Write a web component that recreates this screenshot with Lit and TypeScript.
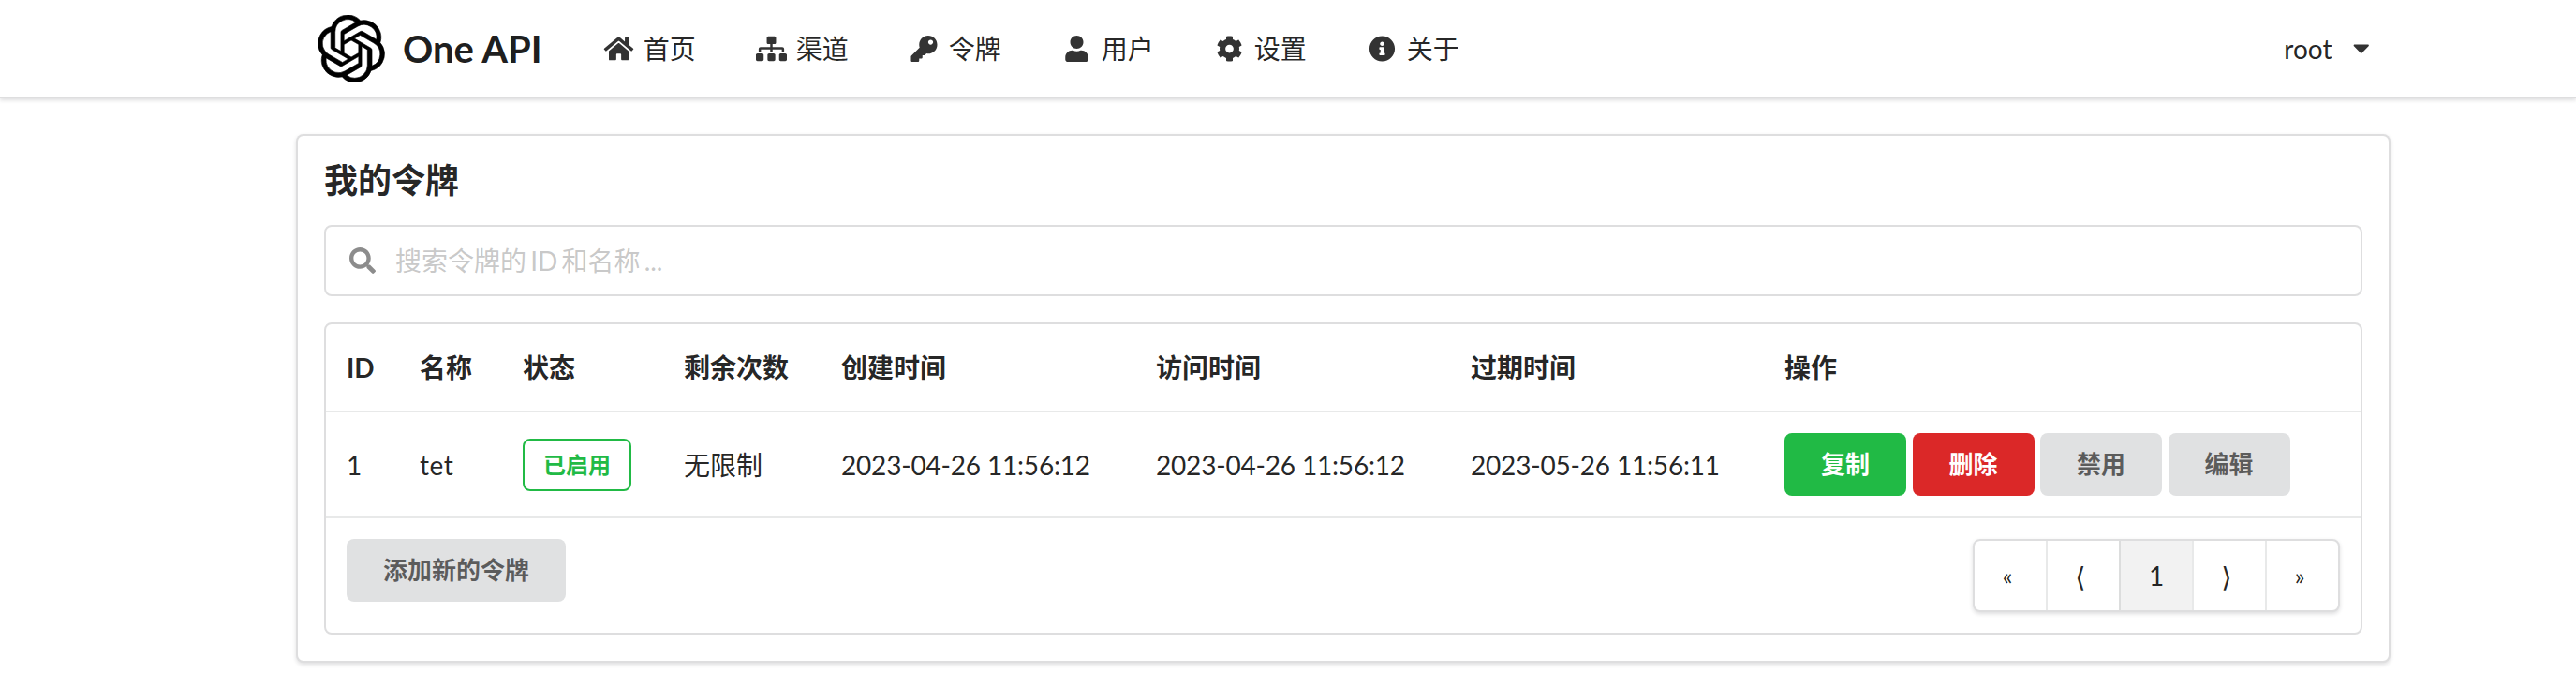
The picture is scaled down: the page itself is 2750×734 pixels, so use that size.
import { LitElement, html, css, svg } from "lit";
import { customElement } from "lit/decorators.js";

const icon = (vb: string, d: string, cls = "ic") =>
  html`<svg class=${cls} viewBox=${vb} aria-hidden="true">${svg`<path d=${d}></path>`}</svg>`;

const ICONS = {
  home: ["0 0 576 512", "M280.37 148.26L96 300.11V464a16 16 0 0 0 16 16l112.06-.29a16 16 0 0 0 15.92-16V368a16 16 0 0 1 16-16h64a16 16 0 0 1 16 16v95.64a16 16 0 0 0 16 16.05L464 480a16 16 0 0 0 16-16V300L295.67 148.26a12.19 12.19 0 0 0-15.3 0zM571.6 251.47L488 182.56V44.05a12 12 0 0 0-12-12h-56a12 12 0 0 0-12 12v72.61L318.47 43a48 48 0 0 0-61 0L4.34 251.47a12 12 0 0 0-1.6 16.9l25.5 31A12 12 0 0 0 45.15 301l235.22-193.74a12.19 12.19 0 0 1 15.3 0L530.9 301a12 12 0 0 0 16.9-1.6l25.5-31a12 12 0 0 0-1.7-16.93z"],
  sitemap: ["0 0 640 512", "M128 352H32c-17.67 0-32 14.33-32 32v96c0 17.67 14.33 32 32 32h96c17.67 0 32-14.33 32-32v-96c0-17.67-14.33-32-32-32zm-24-80h192v48h48v-48h192v48h48v-57.59c0-21.17-17.23-38.41-38.41-38.41H344v-64h40c17.67 0 32-14.33 32-32V32c0-17.67-14.33-32-32-32H256c-17.67 0-32 14.33-32 32v96c0 17.67 14.33 32 32 32h40v64H94.41C73.23 224 56 241.23 56 262.41V320h48v-48zm264 80h-96c-17.67 0-32 14.33-32 32v96c0 17.67 14.33 32 32 32h96c17.67 0 32-14.33 32-32v-96c0-17.67-14.33-32-32-32zm240 0h-96c-17.67 0-32 14.33-32 32v96c0 17.67 14.33 32 32 32h96c17.67 0 32-14.33 32-32v-96c0-17.67-14.33-32-32-32z"],
  key: ["0 0 512 512", "M512 176.001C512 273.203 433.202 352 336 352c-11.22 0-22.19-1.062-32.827-3.069l-24.012 27.014A23.999 23.999 0 0 1 261.223 384H224v40c0 13.255-10.745 24-24 24h-40v40c0 13.255-10.745 24-24 24H24c-13.255 0-24-10.745-24-24v-78.059c0-6.365 2.529-12.47 7.029-16.971l161.802-161.802C163.108 213.814 160 195.271 160 176 160 78.798 238.797.001 335.999 0 433.488-.001 512 78.511 512 176.001zM336 128c0 26.51 21.49 48 48 48s48-21.49 48-48-21.49-48-48-48-48 21.49-48 48z"],
  user: ["0 0 448 512", "M224 256c70.7 0 128-57.3 128-128S294.7 0 224 0 96 57.3 96 128s57.3 128 128 128zm89.6 32h-16.7c-22.2 10.2-46.9 16-72.9 16s-50.6-5.8-72.9-16h-16.7C60.2 288 0 348.2 0 422.4V464c0 26.5 21.5 48 48 48h352c26.5 0 48-21.5 48-48v-41.6c0-74.2-60.2-134.4-134.4-134.4z"],
  cog: ["0 0 512 512", "M487.4 315.7l-42.6-24.6c4.3-23.2 4.3-47 0-70.2l42.6-24.6c4.9-2.8 7.1-8.6 5.5-14-11.1-35.6-30-67.8-54.7-94.6-3.8-4.1-10-5.1-14.8-2.3L380.8 110c-17.9-15.4-38.5-27.3-60.8-35.1V25.8c0-5.6-3.9-10.5-9.4-11.7-36.7-8.2-74.3-7.8-109.2 0-5.5 1.2-9.4 6.1-9.4 11.7V75c-22.2 7.9-42.8 19.8-60.8 35.1L88.7 85.5c-4.9-2.8-11-1.9-14.8 2.3-24.7 26.7-43.6 58.9-54.7 94.6-1.7 5.4.6 11.2 5.5 14L67.3 221c-4.3 23.2-4.3 47 0 70.2l-42.6 24.6c-4.9 2.8-7.1 8.6-5.5 14 11.1 35.6 30 67.8 54.7 94.6 3.8 4.1 10 5.1 14.8 2.3l42.6-24.6c17.9 15.4 38.5 27.3 60.8 35.1v49.2c0 5.6 3.9 10.5 9.4 11.7 36.7 8.2 74.3 7.8 109.2 0 5.5-1.2 9.4-6.1 9.4-11.7v-49.2c22.2-7.9 42.8-19.8 60.8-35.1l42.6 24.6c4.9 2.8 11 1.9 14.8-2.3 24.7-26.7 43.6-58.9 54.7-94.6 1.5-5.5-.7-11.3-5.6-14.1zM256 336c-44.1 0-80-35.9-80-80s35.9-80 80-80 80 35.9 80 80-35.9 80-80 80z"],
  info: ["0 0 512 512", "M256 8C119.043 8 8 119.083 8 256c0 136.997 111.043 248 248 248s248-111.003 248-248C504 119.083 392.957 8 256 8zm0 110c23.196 0 42 18.804 42 42s-18.804 42-42 42-42-18.804-42-42 18.804-42 42-42zm56 254c0 6.627-5.373 12-12 12h-88c-6.627 0-12-5.373-12-12v-24c0-6.627 5.373-12 12-12h12v-64h-12c-6.627 0-12-5.373-12-12v-24c0-6.627 5.373-12 12-12h64c6.627 0 12 5.373 12 12v100h12c6.627 0 12 5.373 12 12v24z"],
};
const SEARCH = "M505 442.7L405.3 343c-4.5-4.5-10.6-7-17-7H372c27.6-35.3 44-79.7 44-128C416 93.1 322.9 0 208 0S0 93.1 0 208s93.1 208 208 208c48.3 0 92.7-16.4 128-44v16.3c0 6.4 2.5 12.5 7 17l99.7 99.7c9.4 9.4 24.6 9.4 33.9 0l28.3-28.3c9.4-9.4 9.4-24.6.1-34zM208 336c-70.7 0-128-57.2-128-128 0-70.7 57.2-128 128-128 70.7 0 128 57.2 128 128 0 70.7-57.2 128-128 128z";
const CARET = "M31.3 192h257.3c17.8 0 26.7 21.5 14.1 34.1L174.1 354.8c-7.8 7.8-20.5 7.8-28.3 0L17.2 226.1C4.6 213.5 13.5 192 31.3 192z";
const LOGO = "M22.2819 9.8211a5.9847 5.9847 0 0 0-.5157-4.9108 6.0462 6.0462 0 0 0-6.5098-2.9A6.0651 6.0651 0 0 0 4.9807 4.1818a5.9847 5.9847 0 0 0-3.9977 2.9 6.0462 6.0462 0 0 0 .7427 7.0966 5.98 5.98 0 0 0 .511 4.9107 6.051 6.051 0 0 0 6.5146 2.9001A5.9847 5.9847 0 0 0 13.2599 24a6.0557 6.0557 0 0 0 5.7718-4.2058 5.9894 5.9894 0 0 0 3.9977-2.9001 6.0557 6.0557 0 0 0-.7475-7.0729zm-9.022 12.6081a4.4755 4.4755 0 0 1-2.8764-1.0408l.1419-.0804 4.7783-2.7582a.7948.7948 0 0 0 .3927-.6813v-6.7369l2.02 1.1686a.071.071 0 0 1 .038.052v5.5826a4.504 4.504 0 0 1-4.4945 4.4944zm-9.6607-4.1254a4.4708 4.4708 0 0 1-.5346-3.0137l.142.0852 4.783 2.7582a.7712.7712 0 0 0 .7806 0l5.8428-3.3685v2.3324a.0804.0804 0 0 1-.0332.0615L9.74 19.9502a4.4992 4.4992 0 0 1-6.1408-1.6464zM2.3408 7.8956a4.485 4.485 0 0 1 2.3655-1.9728V11.6a.7664.7664 0 0 0 .3879.6765l5.8144 3.3543-2.0201 1.1685a.0757.0757 0 0 1-.071 0l-4.8303-2.7865A4.504 4.504 0 0 1 2.3408 7.872zm16.5963 3.8558L13.1038 8.364 15.1192 7.2a.0757.0757 0 0 1 .071 0l4.8303 2.7913a4.4944 4.4944 0 0 1-.6765 8.1042v-5.6772a.79.79 0 0 0-.407-.667zm2.0107-3.0231l-.142-.0852-4.7735-2.7818a.7759.7759 0 0 0-.7854 0L9.409 9.2297V6.8974a.0662.0662 0 0 1 .0284-.0615l4.8303-2.7866a4.4992 4.4992 0 0 1 6.6802 4.66zM8.3065 12.863l-2.02-1.1638a.0804.0804 0 0 1-.038-.0567V6.0742a4.4992 4.4992 0 0 1 7.3757-3.4537l-.142.0805L8.704 5.459a.7948.7948 0 0 0-.3927.6813zm1.0976-2.3654l2.602-1.4998 2.6069 1.4998v2.9994l-2.5974 1.4997-2.6067-1.4997Z";

const NAV: [keyof typeof ICONS, string][] = [
  ["home", "首页"],
  ["sitemap", "渠道"],
  ["key", "令牌"],
  ["user", "用户"],
  ["cog", "设置"],
  ["info", "关于"],
];
const COLS = ["ID", "名称", "状态", "剩余次数", "创建时间", "访问时间", "过期时间", "操作"];

@customElement("app-root")
export class AppRoot extends LitElement {
  static styles = css`
    :host {
      display: block;
      min-height: 734px;
      background: #fff;
      color: rgba(0, 0, 0, 0.87);
      font-family: Lato, "Noto Sans CJK SC", "Noto Sans", sans-serif;
      font-size: 28px;
      line-height: 40px;
    }
    * { box-sizing: border-box; }
    .menu {
      height: 105px;
      border-bottom: 2px solid rgba(34, 36, 38, 0.15);
      box-shadow: 0 2px 4px 0 rgba(34, 36, 38, 0.15);
      background: #fff;
    }
    .menu-in {
      width: 2254px;
      height: 100%;
      margin-left: 307px;
      display: flex;
      align-items: center;
    }
    .brand {
      display: flex;
      align-items: center;
      padding: 0 33px 0 32px;
      font-size: 40px;
      font-weight: 700;
      color: rgba(0, 0, 0, 0.9);
    }
    .logo {
      width: 72px;
      height: 72px;
      margin-right: 19px;
      fill: #000;
    }
    .logo path { stroke: #000; stroke-width: 0.2; }
    .item {
      display: flex;
      align-items: center;
      padding: 0 32px;
    }
    .ic {
      width: 33px;
      height: 28px;
      margin-right: 10px;
      fill: rgba(0, 0, 0, 0.8);
      flex: none;
    }
    .user {
      margin-left: auto;
      display: flex;
      align-items: center;
      padding: 0 32px;
    }
    .caret {
      width: 17.5px;
      height: 28px;
      margin: -2px 0 0 22px;
      fill: rgba(0, 0, 0, 0.8);
    }
    .page {
      width: 2236px;
      margin: 38px 0 0 316px;
    }
    .card {
      border: 2px solid rgba(34, 36, 38, 0.15);
      border-radius: 8px;
      box-shadow: 0 2px 4px 0 rgba(34, 36, 38, 0.15);
      padding: 28px;
      background: #fff;
    }
    h3 {
      margin: -4px 0 0;
      font-size: 36px;
      line-height: 46px;
      font-weight: 700;
      padding-bottom: 25px;
    }
    .search {
      height: 76px;
      border: 2px solid rgba(34, 36, 38, 0.15);
      border-radius: 8px;
      display: flex;
      align-items: center;
      padding-left: 25px;
      margin-bottom: 28px;
    }
    .search-ic {
      width: 28px;
      height: 28px;
      fill: rgba(0, 0, 0, 0.45);
      flex: none;
      margin-right: 21px;
    }
    .ph {
      color: rgba(191, 191, 191, 0.87);
      word-spacing: -3px;
    }
    .tbl {
      border: 2px solid rgba(34, 36, 38, 0.15);
      border-radius: 8px;
    }
    table {
      width: 100%;
      border-collapse: separate;
      border-spacing: 0;
      table-layout: fixed;
    }
    thead th {
      text-align: left;
      font-weight: 700;
      padding: 26px 22px;
      border-bottom: 2px solid rgba(34, 36, 38, 0.1);
    }
    thead th:nth-child(1) { width: 78px; }
    thead th:nth-child(2) { width: 110px; }
    thead th:nth-child(3) { width: 172px; }
    thead th:nth-child(4) { width: 168px; }
    thead th:nth-child(5) { width: 336px; }
    thead th:nth-child(6) { width: 336px; }
    thead th:nth-child(7) { width: 335px; }
    td { padding: 22px; white-space: nowrap; }
    .date { letter-spacing: -0.18px; }
    .name { letter-spacing: 0.6px; }
    .badge {
      display: inline-block;
      border: 2px solid #21ba45;
      border-radius: 8px;
      color: #21ba45;
      font-size: 24px;
      line-height: 24px;
      font-weight: 700;
      padding: 14px 20px;
      vertical-align: middle;
    }
    .btns { display: flex; gap: 6.5px; }
    .btn {
      display: inline-block;
      height: 67px;
      padding: 0 39px;
      border-radius: 8px;
      font-size: 26px;
      line-height: 67px;
      font-weight: 700;
      background: #e0e1e2;
      color: rgba(0, 0, 0, 0.6);
      white-space: nowrap;
    }
    .green { background: #21ba45; color: #fff; }
    .red { background: #db2828; color: #fff; }
    .foot {
      border-top: 2px solid rgba(34, 36, 38, 0.1);
      padding: 22px;
      display: flex;
      justify-content: space-between;
      align-items: flex-start;
    }
    .pager {
      display: flex;
      height: 78px;
      border: 2px solid rgba(34, 36, 38, 0.15);
      border-radius: 8px;
      box-shadow: 0 2px 4px 0 rgba(34, 36, 38, 0.15);
    }
    .pg {
      width: 78px;
      display: flex;
      align-items: center;
      justify-content: center;
      border-left: 2px solid rgba(34, 36, 38, 0.1);
    }
    .pg:first-child { border-left: 0; width: 76px; }
    .pg.on { background: rgba(0, 0, 0, 0.05); }
    .pg.dbl { font-size: 25px; padding: 0 6px 0 0; }
    .pg.sgl {
      font-family: "DejaVu Sans", sans-serif;
      font-size: 29px;
      padding: 4px 6px 0 0;
    }
  `;

  render() {
    return html`
      <div class="menu">
        <div class="menu-in">
          <div class="brand">
            <svg class="logo" viewBox="0 0 24 24" aria-hidden="true"><path d=${LOGO}></path></svg>
            <span>One API</span>
          </div>
          ${NAV.map(([k, t]) => html`<div class="item">${icon(ICONS[k][0], ICONS[k][1])}<span>${t}</span></div>`)}
          <div class="user"><span>root</span>${icon("0 0 320 512", CARET, "caret")}</div>
        </div>
      </div>
      <div class="page">
        <div class="card">
          <h3>我的令牌</h3>
          <div class="search">${icon("0 0 512 512", SEARCH, "search-ic")}<span class="ph">搜索令牌的 ID 和名称 ...</span></div>
          <div class="tbl">
            <table>
              <thead><tr>${COLS.map((c) => html`<th>${c}</th>`)}</tr></thead>
              <tbody>
                <tr>
                  <td>1</td>
                  <td class="name">tet</td>
                  <td><span class="badge">已启用</span></td>
                  <td>无限制</td>
                  <td class="date">2023-04-26 11:56:12</td>
                  <td class="date">2023-04-26 11:56:12</td>
                  <td class="date">2023-05-26 11:56:11</td>
                  <td>
                    <div class="btns">
                      <span class="btn green">复制</span>
                      <span class="btn red">删除</span>
                      <span class="btn">禁用</span>
                      <span class="btn">编辑</span>
                    </div>
                  </td>
                </tr>
              </tbody>
            </table>
            <div class="foot">
              <span class="btn">添加新的令牌</span>
              <div class="pager">
                <div class="pg dbl">«</div>
                <div class="pg sgl">⟨</div>
                <div class="pg on">1</div>
                <div class="pg sgl">⟩</div>
                <div class="pg dbl">»</div>
              </div>
            </div>
          </div>
        </div>
      </div>
    `;
  }
}
